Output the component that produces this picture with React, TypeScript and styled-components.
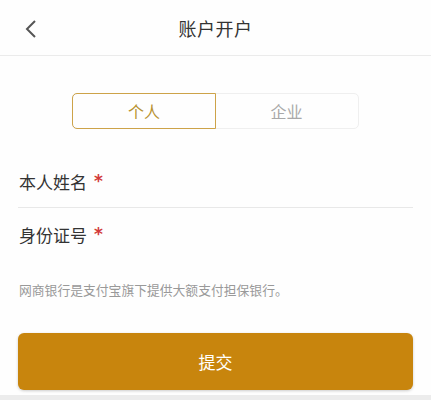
import styled, { createGlobalStyle } from "styled-components";
import { useState } from "react";

const GlobalStyle = createGlobalStyle`
  html, body {
    margin: 0;
    padding: 0;
    background: #ffffff;
    font-family: "Noto Sans CJK SC", "Noto Sans", sans-serif;
  }
`;

function App() {
  const [type, setType] = useState<"person" | "company">("person");
  return (
    <Page>
      <GlobalStyle />
      <Header>
        <Back aria-label="返回">
          <svg width="14" height="20" viewBox="0 0 14 20">
            <path d="M11 2 L3 10 L11 18" fill="none" stroke="#555" strokeWidth="2" />
          </svg>
        </Back>
        <Title>账户开户</Title>
      </Header>

      <Body>
        <Segment>
          <SegItem $active={type === "person"} onClick={() => setType("person")}>
            个人
          </SegItem>
          <SegItem $active={type === "company"} onClick={() => setType("company")}>
            企业
          </SegItem>
        </Segment>

        <Field $line>
          <Label>本人姓名</Label>
          <Star>*</Star>
        </Field>
        <Field>
          <Label>身份证号</Label>
          <Star>*</Star>
        </Field>

        <Note>网商银行是支付宝旗下提供大额支付担保银行。</Note>

        <Submit>提交</Submit>
      </Body>
      <BottomBar />
    </Page>
  );
}

const Page = styled.div`
  width: 431px;
  height: 400px;
  display: flex;
  flex-direction: column;
  background: #fefefe;
  overflow: hidden;
`;

const Header = styled.div`
  height: 56px;
  display: flex;
  align-items: center;
  justify-content: center;
  position: relative;
  border-bottom: 1px solid #ebebeb;
  box-sizing: border-box;
`;

const Back = styled.button`
  position: absolute;
  left: 21px;
  top: 18px;
  border: 0;
  background: none;
  padding: 0;
  width: 20px;
  height: 22px;
  display: flex;
  align-items: center;
  justify-content: center;
`;

const Title = styled.div`
  font-size: 18px;
  color: #333;
  letter-spacing: 0.5px;
`;

const Body = styled.div`
  flex: 1;
  display: flex;
  flex-direction: column;
  padding: 37px 18px 0 18px;
`;

const Segment = styled.div`
  align-self: center;
  width: 287px;
  height: 36px;
  display: grid;
  grid-template-columns: 143px 1fr;
  border: 1px solid #efefef;
  border-radius: 5px;
  box-sizing: border-box;
`;

const SegItem = styled.div<{ $active: boolean }>`
  display: flex;
  align-items: center;
  justify-content: center;
  font-size: 16px;
  margin: -1px 0 -1px -1px;
  color: ${(p) => (p.$active ? "#b8922f" : "#a8a8a8")};
  border: 1px solid ${(p) => (p.$active ? "#cda349" : "transparent")};
  border-radius: ${(p) => (p.$active ? "5px 0 0 5px" : "0")};
  cursor: pointer;
`;

const Field = styled.div<{ $line?: boolean }>`
  display: flex;
  align-items: center;
  height: 52px;
  margin-top: ${(p) => (p.$line ? "26px" : "0")};
  padding-left: 1px;
  border-bottom: 1px solid ${(p) => (p.$line ? "#e8e8e8" : "transparent")};
`;

const Label = styled.span`
  font-size: 17px;
  color: #333;
`;

const Star = styled.span`
  color: #d23a3a;
  font-family: "DejaVu Sans", sans-serif;
  font-size: 17px;
  font-weight: bold;
  margin-left: 7px;
`;

const Note = styled.div`
  margin-top: 19px;
  font-size: 12.8px;
  color: #999;
  padding-left: 1px;
`;

const Submit = styled.button`
  margin-top: 34px;
  height: 57px;
  border: 0;
  border-radius: 6px;
  background: #c8850d;
  color: #fff;
  font-family: inherit;
  font-size: 17px;
  box-shadow: 0 1px 3px rgba(0, 0, 0, 0.2);
`;

const BottomBar = styled.div`
  height: 5px;
  background: #ececec;
`;

export default App;
